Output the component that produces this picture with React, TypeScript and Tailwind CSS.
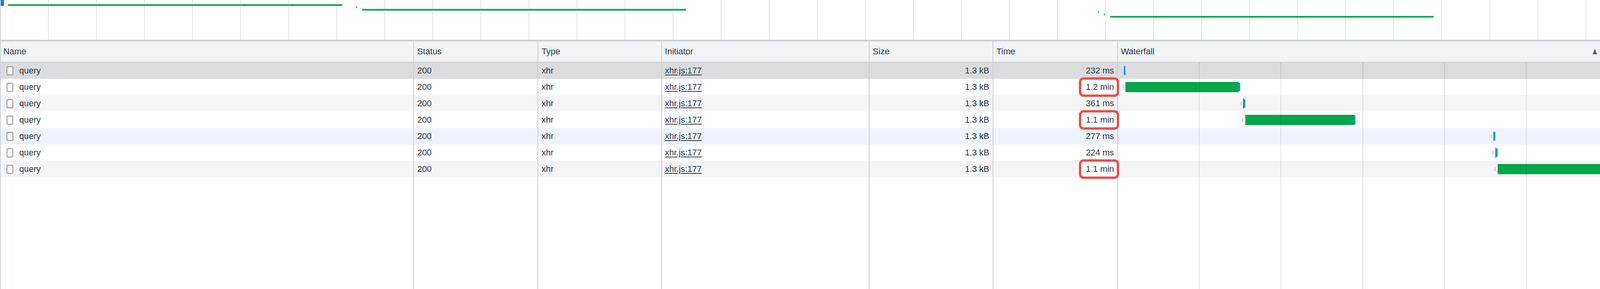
import React from 'react'

type Seg = { x0: number; x1: number; y0: number; y1: number; c: string }

// all x values are measured on a 4464px wide capture; they are laid out as a share of the width
const W = 4464
const pct = (x: number) => `${(x / W) * 100}%`

const GREEN = '#04a64a'
const BLUE = '#1598dc'
const TICK = '#d2d2d2'

const rows: { time: string; bg: string; hl?: boolean; segs: Seg[] }[] = [
  {
    time: '232 ms',
    bg: 'bg-[#dadce0]',
    segs: [
      { x0: 3127, x1: 3130, y0: 17, y1: 26, c: TICK },
      { x0: 3136, x1: 3140, y0: 9, y1: 32, c: BLUE },
    ],
  },
  {
    time: '1.2 min',
    bg: 'bg-white',
    hl: true,
    segs: [
      { x0: 3132, x1: 3136, y0: 15, y1: 25, c: TICK },
      { x0: 3140, x1: 3456, y0: 8, y1: 34, c: GREEN },
      { x0: 3456, x1: 3460, y0: 10, y1: 32, c: BLUE },
    ],
  },
  {
    time: '361 ms',
    bg: 'bg-[#f5f5f5]',
    segs: [
      { x0: 3460, x1: 3464, y0: 16, y1: 26, c: TICK },
      { x0: 3468, x1: 3470, y0: 8, y1: 34, c: GREEN },
      { x0: 3470, x1: 3474, y0: 10, y1: 32, c: BLUE },
    ],
  },
  {
    time: '1.1 min',
    bg: 'bg-white',
    hl: true,
    segs: [
      { x0: 3465, x1: 3469, y0: 16, y1: 26, c: TICK },
      { x0: 3474, x1: 3778, y0: 8, y1: 34, c: GREEN },
      { x0: 3778, x1: 3782, y0: 10, y1: 32, c: BLUE },
    ],
  },
  {
    time: '277 ms',
    bg: 'bg-[#eef3fb]',
    segs: [
      { x0: 4158, x1: 4162, y0: 16, y1: 26, c: TICK },
      { x0: 4166, x1: 4168, y0: 8, y1: 34, c: GREEN },
      { x0: 4168, x1: 4172, y0: 10, y1: 32, c: BLUE },
    ],
  },
  {
    time: '224 ms',
    bg: 'bg-white',
    segs: [
      { x0: 4163, x1: 4167, y0: 16, y1: 26, c: TICK },
      { x0: 4172, x1: 4174, y0: 8, y1: 34, c: GREEN },
      { x0: 4174, x1: 4178, y0: 10, y1: 32, c: BLUE },
    ],
  },
  {
    time: '1.1 min',
    bg: 'bg-[#f5f5f5]',
    hl: true,
    segs: [
      { x0: 4169, x1: 4173, y0: 16, y1: 26, c: TICK },
      { x0: 4178, x1: 4464, y0: 8, y1: 34, c: GREEN },
    ],
  },
]

// overview bars
const overviewBars = [
  { x0: 22, x1: 956, y: 10 },
  { x0: 993, x1: 997, y: 16 },
  { x0: 1009, x1: 1916, y: 22 },
  { x0: 3064, x1: 3068, y: 28 },
  { x0: 3080, x1: 3084, y: 34 },
  { x0: 3098, x1: 4003, y: 40 },
]

const overviewLines = Array.from({ length: 33 }, (_, i) => 134.1 * (i + 1) - 2)
const waterfallLines = [3345, 3573, 3801, 4029, 4257]

const grid = 'grid grid-cols-[25.829%_7.773%_7.729%_12.97%_7.729%_7.796%_1fr]'
const cell = 'border-l-2 border-[#cbcdd1] flex items-center min-w-0 whitespace-nowrap'

function DocIcon() {
  return <span className="block shrink-0 w-[17px] h-[23px] rounded-[3px] border-2 border-[#8e8e8e] bg-white" />
}

function Overview() {
  return (
    <div className="relative h-[102px] bg-white border-l-2 border-[#cdd3dc] overflow-hidden">
      {overviewLines.map((x) => (
        <div key={x} className="absolute top-0 bottom-0 w-[2px] bg-[#e2e2e2]" style={{ left: pct(x) }} />
      ))}
      <div className="absolute left-0 top-0 w-[8px] h-[15px] bg-[#1a73e8]" />
      <div className="absolute left-0 top-0 w-[4px] h-[8px] bg-[#0f9d58]" />
      {overviewBars.map((b) => (
        <div
          key={b.x0}
          className="absolute h-[6px] min-w-[4px] border border-[#dcf2e4] bg-[#07a84b]"
          style={{ left: pct(b.x0 - 2), width: pct(b.x1 - b.x0), top: b.y }}
        />
      ))}
    </div>
  )
}

function Header() {
  return (
    <div className={`${grid} h-[54px] bg-[#f1f3f4] border-b-2 border-[#cbcdd1]`}>
      <div className={`${cell} border-[#cdd3dc] pl-[0.157vw]`}>Name</div>
      <div className={`${cell} pl-[0.2vw]`}>Status</div>
      <div className={`${cell} pl-[0.2vw]`}>Type</div>
      <div className={`${cell} pl-[0.18vw]`}>Initiator</div>
      <div className={`${cell} pl-[0.2vw]`}>Size</div>
      <div className={`${cell} pl-[0.2vw]`}>Time</div>
      <div className={`${cell} pl-[0.18vw] pr-[0.18vw] justify-between`}>
        <span>Waterfall</span>
        <svg width="12" height="14" viewBox="0 0 12 14" aria-hidden="true">
          <polygon points="6,0 12,14 0,14" fill="#5f6368" />
        </svg>
      </div>
    </div>
  )
}

export default function App() {
  return (
    <div className="w-full h-[740px] overflow-hidden bg-white flex flex-col text-[0.5376vw] leading-none text-[#303942] font-['Liberation_Sans',Arial,sans-serif]">
      <Overview />
      <div className="h-[4px] bg-[#cbcdd1]" />
      <Header />
      <div className="relative flex-1 flex flex-col">
        {rows.map((r, i) => (
          <div key={i} className={`${grid} relative h-[42px] ${r.bg}`}>
            <div className={`${cell} border-[#cdd3dc] pl-[0.358vw] gap-[0.381vw]`}>
              <DocIcon />
              <span>query</span>
            </div>
            <div className={`${cell} pl-[0.2vw]`}>200</div>
            <div className={`${cell} pl-[0.2vw]`}>xhr</div>
            <div className={`${cell} pl-[0.18vw]`}>
              <span className="underline decoration-2 underline-offset-[3px]">xhr.js:177</span>
            </div>
            <div className={`${cell} justify-end pr-[0.2vw]`}>1.3 kB</div>
            <div className={`${cell} justify-end pr-[0.2vw]`}>
              <span className="relative z-30">{r.time}</span>
            </div>
            <div className={cell} />

            {/* waterfall timing segments */}
            {r.segs.map((s, j) => (
              <div
                key={j}
                className="absolute"
                style={{
                  left: pct(s.x0),
                  width: pct(s.x1 - s.x0),
                  top: s.y0,
                  height: s.y1 - s.y0,
                  background: s.c,
                }}
              />
            ))}

            {/* red annotation round the long requests */}
            {r.hl && (
              <div
                className="absolute z-20 top-[-4px] h-[50px] rounded-[12px] border-[6px] border-[#f34b4b] bg-white"
                style={{ left: pct(3010), width: pct(112) }}
              />
            )}
          </div>
        ))}
        <div className={`${grid} flex-1`}>
          <div className={`${cell} border-[#cdd3dc]`} />
          <div className={cell} />
          <div className={cell} />
          <div className={cell} />
          <div className={cell} />
          <div className={cell} />
          <div className={cell} />
        </div>
        {waterfallLines.map((x) => (
          <div
            key={x}
            className="absolute top-0 bottom-0 w-[2px] bg-[rgba(0,0,0,0.11)] pointer-events-none"
            style={{ left: pct(x) }}
          />
        ))}
      </div>
    </div>
  )
}
